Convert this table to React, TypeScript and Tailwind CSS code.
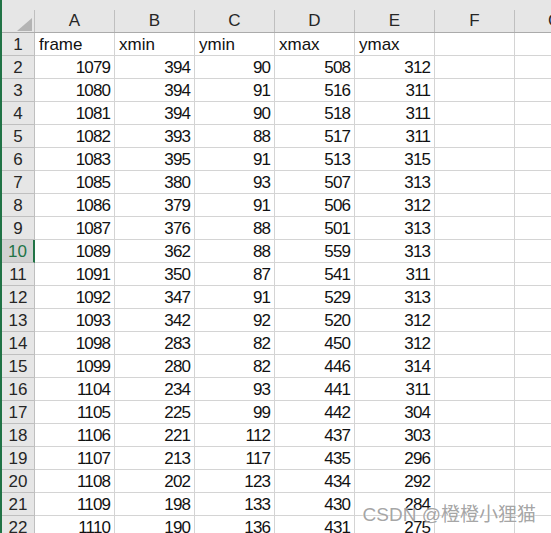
const rows: (string | number)[][] = [
  ["frame", "xmin", "ymin", "xmax", "ymax"],
  [1079, 394, 90, 508, 312],
  [1080, 394, 91, 516, 311],
  [1081, 394, 90, 518, 311],
  [1082, 393, 88, 517, 311],
  [1083, 395, 91, 513, 315],
  [1085, 380, 93, 507, 313],
  [1086, 379, 91, 506, 312],
  [1087, 376, 88, 501, 313],
  [1089, 362, 88, 559, 313],
  [1091, 350, 87, 541, 311],
  [1092, 347, 91, 529, 313],
  [1093, 342, 92, 520, 312],
  [1098, 283, 82, 450, 312],
  [1099, 280, 82, 446, 314],
  [1104, 234, 93, 441, 311],
  [1105, 225, 99, 442, 304],
  [1106, 221, 112, 437, 303],
  [1107, 213, 117, 435, 296],
  [1108, 202, 123, 434, 292],
  [1109, 198, 133, 430, 284],
  [1110, 190, 136, 431, 275],
];

const cols = ["A", "B", "C", "D", "E", "F", "G"];
const font = { fontFamily: '"Liberation Sans", "Noto Sans CJK SC", sans-serif' };

function HeaderRow() {
  return (
    <div className="flex h-[33px] shrink-0 flex-col border-b border-[#ababab] bg-[#e6e6e6]">
      <div className="h-[10px] shrink-0" />
      <div className="flex h-[22px]">
        <div className="relative w-[33px] shrink-0 border-r border-[#bfbfbf]">
          <svg className="absolute right-[2px] bottom-[1px]" width="15" height="13" viewBox="0 0 15 13">
            <polygon points="15,0 15,13 0,13" fill="#b4b4b4" />
          </svg>
        </div>
        {cols.map((c) => (
          <div
            key={c}
            className="flex w-[80px] shrink-0 items-center justify-center border-r border-[#bfbfbf] text-[17px] leading-[22px] text-[#262626]"
          >
            {c}
          </div>
        ))}
      </div>
    </div>
  );
}

function Row({ n, cells }: { n: number; cells: (string | number)[] }) {
  const active = n === 10;
  return (
    <div className="flex h-[23px] shrink-0">
      <div
        className={
          active
            ? "flex w-[33px] shrink-0 items-center justify-center border-r-2 border-b border-r-[#217346] border-b-[#bfbfbf] bg-[#d2d2d2] pt-[1px] text-[17px] text-[#217346]"
            : "flex w-[33px] shrink-0 items-center justify-center border-r border-b border-[#bfbfbf] bg-[#e6e6e6] pt-[1px] text-[17px] text-[#262626]"
        }
      >
        {n}
      </div>
      {cols.map((c, i) => {
        const v = cells[i];
        const num = typeof v === "number";
        return (
          <div
            key={c}
            className={
              num
                ? "flex w-[80px] shrink-0 items-center justify-end border-r border-b border-[#d4d4d4] pt-[1px] pr-[4px] text-[17px] tracking-[-0.9px] text-[#111]"
                : "flex w-[80px] shrink-0 items-center justify-start border-r border-b border-[#d4d4d4] pt-[1px] pl-[4px] text-[17px] text-[#111]"
            }
          >
            {v ?? ""}
          </div>
        );
      })}
    </div>
  );
}

export default function App() {
  return (
    <div className="relative h-[533px] w-[551px] overflow-hidden bg-white" style={font}>
      <div className="flex h-full border-l-2 border-[#217346]">
        <div className="flex flex-col">
          <HeaderRow />
          {rows.map((r, i) => (
            <Row key={i} n={i + 1} cells={r} />
          ))}
        </div>
      </div>
      <div className="absolute right-[15px] bottom-[4px] text-[19px] text-[#9a9a9a]/90 [text-shadow:0_0_2px_white]">
        CSDN @橙橙小狸猫
      </div>
    </div>
  );
}
